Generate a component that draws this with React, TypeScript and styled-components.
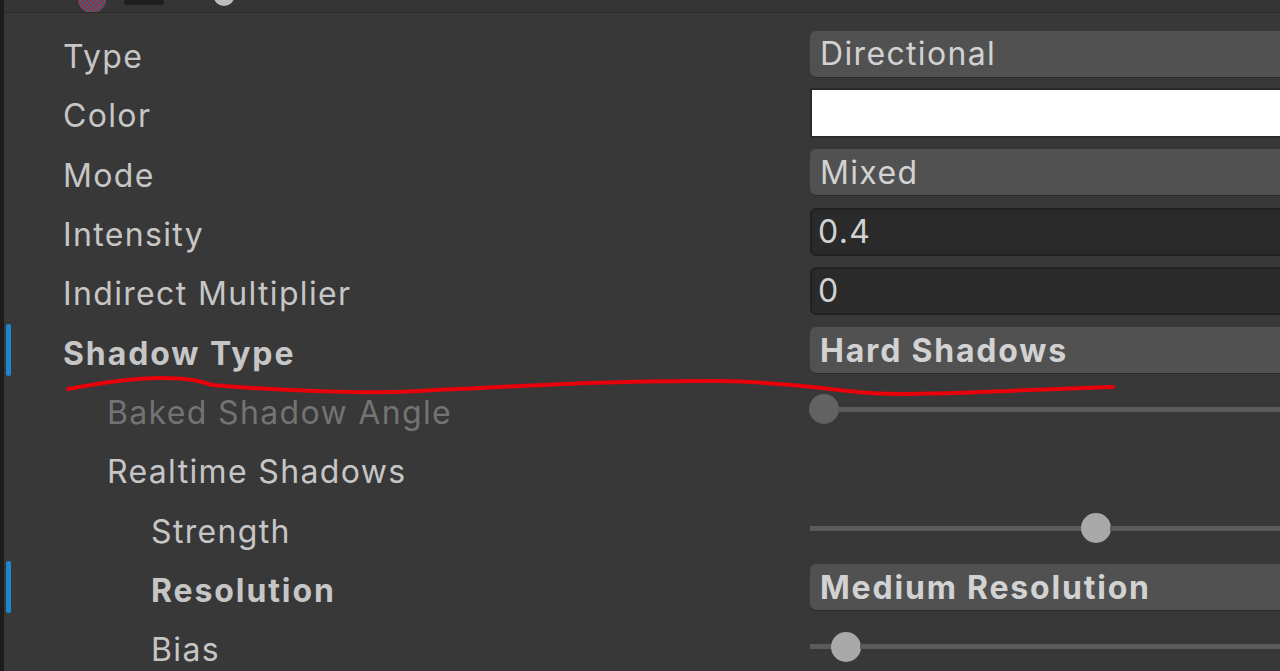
import React from 'react'
import styled, { createGlobalStyle } from 'styled-components'

const GlobalStyle = createGlobalStyle`
  html, body {
    margin: 0;
    padding: 0;
    background: #383838;
    overflow: hidden;
  }
  body {
    font-family: Inter, "Noto Sans", "Liberation Sans", sans-serif;
  }
`

type Field =
  | { kind: 'dropdown'; value: string }
  | { kind: 'color' }
  | { kind: 'number'; value: string }
  | { kind: 'slider'; pos: number; disabled?: boolean }
  | { kind: 'none' }

interface Prop {
  label: string
  indent: number
  bold?: boolean
  disabled?: boolean
  changed?: boolean
  field: Field
}

const PROPS: Prop[] = [
  { label: 'Type', indent: 0, field: { kind: 'dropdown', value: 'Directional' } },
  { label: 'Color', indent: 0, field: { kind: 'color' } },
  { label: 'Mode', indent: 0, field: { kind: 'dropdown', value: 'Mixed' } },
  { label: 'Intensity', indent: 0, field: { kind: 'number', value: '0.4' } },
  { label: 'Indirect Multiplier', indent: 0, field: { kind: 'number', value: '0' } },
  {
    label: 'Shadow Type',
    indent: 0,
    bold: true,
    changed: true,
    field: { kind: 'dropdown', value: 'Hard Shadows' },
  },
  {
    label: 'Baked Shadow Angle',
    indent: 1,
    disabled: true,
    field: { kind: 'slider', pos: 0, disabled: true },
  },
  { label: 'Realtime Shadows', indent: 1, field: { kind: 'none' } },
  { label: 'Strength', indent: 2, field: { kind: 'slider', pos: 272 } },
  {
    label: 'Resolution',
    indent: 2,
    bold: true,
    changed: true,
    field: { kind: 'dropdown', value: 'Medium Resolution' },
  },
  { label: 'Bias', indent: 2, field: { kind: 'slider', pos: 22 } },
]

const App = () => {
  return (
    <>
      <GlobalStyle />
      <Inspector>
        <EdgeStrip />
        <Panel>
          <Header>
            <CheckerDot />
            <DarkTab />
            <LightDot />
          </Header>
          <List>
            {PROPS.map((p) => (
              <Row key={p.label}>
                <ChangeMark $on={p.changed} />
                <Label $indent={p.indent} $bold={p.bold} $disabled={p.disabled}>
                  {p.label}
                </Label>
                <Control>{renderField(p.field, p.bold)}</Control>
              </Row>
            ))}
          </List>
          <Scribble viewBox="0 0 1280 671" preserveAspectRatio="none">
            <path
              d="M68 389 C 100 383, 130 378, 160 378 C 190 378, 200 381, 212 385 C 300 392, 360 394, 420 391 C 520 386, 620 380, 720 381 C 790 382, 830 390, 870 393 C 920 396, 990 391, 1113 387"
              fill="none"
              stroke="#e8000a"
              strokeWidth="4"
              strokeLinecap="round"
            />
          </Scribble>
        </Panel>
      </Inspector>
    </>
  )
}

function renderField(f: Field, bold?: boolean) {
  switch (f.kind) {
    case 'dropdown':
      return <Dropdown $bold={bold}>{f.value}</Dropdown>
    case 'color':
      return <ColorSwatch />
    case 'number':
      return <NumberBox>{f.value}</NumberBox>
    case 'slider':
      return (
        <Slider>
          <TrackPart style={{ width: f.pos }} />
          <Knob $disabled={f.disabled} />
          <TrackPart $grow />
        </Slider>
      )
    default:
      return null
  }
}

export default App

const Inspector = styled.div`
  display: flex;
  width: 1280px;
  height: 671px;
  overflow: hidden;
`

const EdgeStrip = styled.div`
  width: 4px;
  flex-shrink: 0;
  background: #1d1d1d;
`

const Panel = styled.div`
  position: relative;
  flex: 1;
  background: #383838;
`

const Header = styled.div`
  display: flex;
  align-items: flex-start;
  gap: 18px;
  height: 12px;
  padding-left: 74px;
  overflow: hidden;
  background: #353535;
  border-bottom: 1px solid #2b2b2b;
`

const CheckerDot = styled.span`
  flex-shrink: 0;
  width: 28px;
  height: 27px;
  margin-top: -14px;
  border-radius: 50%;
  background: repeating-conic-gradient(#8c3646 0 25%, #4c5878 0 50%) 0 0 / 4px 4px;
`

const DarkTab = styled.span`
  flex-shrink: 0;
  width: 40px;
  height: 5px;
  border-radius: 0 0 3px 3px;
  background: #1f1f1f;
`

const LightDot = styled.span`
  flex-shrink: 0;
  width: 20px;
  height: 18px;
  margin-top: -12px;
  margin-left: 32px;
  border-radius: 50%;
  background: #bdbdbd;
`

const List = styled.div`
  display: flex;
  flex-direction: column;
  padding-top: 11px;
`

const Row = styled.div`
  display: grid;
  grid-template-columns: 7px 799px 1fr;
  align-items: center;
  height: 59.3px;
`

const ChangeMark = styled.span<{ $on?: boolean }>`
  justify-self: end;
  width: 5px;
  height: 52px;
  border-radius: 2px;
  background: ${(p) => (p.$on ? '#1c86cf' : 'transparent')};
`

const Label = styled.div<{ $indent: number; $bold?: boolean; $disabled?: boolean }>`
  padding-left: ${(p) => 52 + p.$indent * 44}px;
  padding-top: 6px;
  font-size: 32px;
  letter-spacing: ${(p) => (p.$bold ? 1.9 : 1.35)}px;
  font-weight: ${(p) => (p.$bold ? 700 : 400)};
  color: ${(p) => (p.$disabled ? '#737373' : '#c6c6c6')};
  white-space: nowrap;
`

const Control = styled.div`
  display: flex;
  align-items: center;
  margin-right: -20px;
`

const Dropdown = styled.div<{ $bold?: boolean }>`
  flex: 1;
  height: 46px;
  display: flex;
  align-items: center;
  padding-left: 10px;
  border-radius: 6px;
  background: #515151;
  box-shadow: 0 1px 0 #2a2a2a;
  font-size: 32px;
  letter-spacing: ${(p) => (p.$bold ? 1.8 : 1.35)}px;
  font-weight: ${(p) => (p.$bold ? 700 : 400)};
  color: #d2d2d2;
`

const ColorSwatch = styled.div`
  flex: 1;
  height: 46px;
  background: #ffffff;
  border: 2px solid #2a2a2a;
  border-right: none;
`

const NumberBox = styled.div`
  flex: 1;
  height: 44px;
  display: flex;
  align-items: center;
  padding-left: 6px;
  border-radius: 6px;
  background: #2a2a2a;
  border: 2px solid #212121;
  font-size: 32px;
  letter-spacing: 1.35px;
  color: #d2d2d2;
`

const Slider = styled.div`
  flex: 1;
  height: 46px;
  display: flex;
  align-items: center;
`

const TrackPart = styled.div<{ $grow?: boolean }>`
  flex: ${(p) => (p.$grow ? 1 : 'none')};
  height: 5px;
  background: #5b5b5b;
`

const Knob = styled.div<{ $disabled?: boolean }>`
  flex-shrink: 0;
  width: 30px;
  height: 30px;
  margin: 0 -1px;
  border-radius: 50%;
  background: ${(p) => (p.$disabled ? '#626262' : '#a9a9a9')};
`

const Scribble = styled.svg`
  position: absolute;
  left: -4px;
  top: 0;
  width: 1280px;
  height: 671px;
  pointer-events: none;
`
